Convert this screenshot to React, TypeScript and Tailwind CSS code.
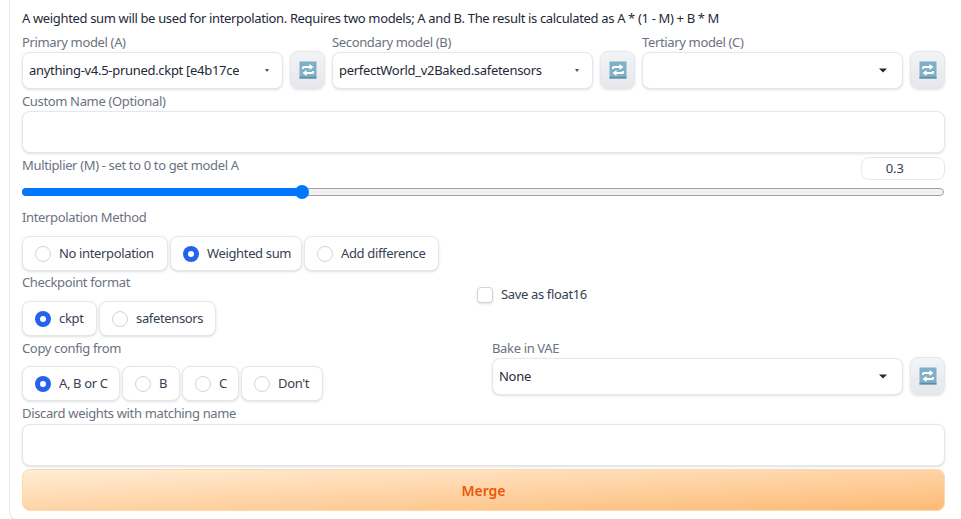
const font = "font-['Noto_Sans',sans-serif]";

function RefreshIcon() {
  return (
    <svg width="18" height="18" viewBox="0 0 18 18" aria-hidden="true">
      <rect x="0.5" y="0.5" width="17" height="17" fill="#7fb0c8" />
      <rect x="0.5" y="15.8" width="17" height="1.7" fill="#5d8ea8" />
      <path d="M3 8 V6.6 Q3 5 5 5 H10.5 V3 L14.5 6 L10.5 9 V7 H5.2 Q5 7 5 8 Z" fill="#fff" />
      <path d="M15 10 V11.4 Q15 13 13 13 H7.5 V15 L3.5 12 L7.5 9 V11 H12.8 Q13 11 13 10 Z" fill="#fff" />
    </svg>
  );
}

function RefreshButton() {
  return (
    <button className="w-[35px] h-[38px] shrink-0 -mt-px rounded-lg bg-gradient-to-b from-[#f3f4f6] to-[#e5e7eb] border border-[#e5e7eb] shadow-sm flex items-center justify-center">
      <RefreshIcon />
    </button>
  );
}

function Label({ children }: { children: React.ReactNode }) {
  return <div className="text-[13px] tracking-[-0.35px] leading-[18px] text-[#6b7280]">{children}</div>;
}

function Caret({ small }: { small?: boolean }) {
  return small ? (
    <svg width="4" height="3" viewBox="0 0 4 3" className="shrink-0"><path d="M0 0H4L2 3Z" fill="#4b5563" /></svg>
  ) : (
    <svg width="8" height="5" viewBox="0 0 8 5" className="shrink-0"><path d="M0 0.5H8L4 4.5Z" fill="#1f2937" /></svg>
  );
}

function Select({ value, small, pr }: { value: string; small?: boolean; pr: string }) {
  return (
    <div className={`flex-1 min-w-0 h-[37px] rounded-lg border border-[#e5e7eb] bg-white shadow-sm flex items-center justify-between pl-[6px] ${pr}`}>
      <span className="text-[13px] tracking-[-0.3px] text-[#1f2937] whitespace-nowrap overflow-hidden">{value}</span>
      <Caret small={small} />
    </div>
  );
}

function ModelField({ label, value, small }: { label: string; value: string; small?: boolean }) {
  return (
    <div className="w-[303px] shrink-0">
      <Label>{label}</Label>
      <div className="flex gap-[7px] mt-[1px]">
        <Select value={value} small={small} pr={small ? "pr-[13px]" : "pr-[15px]"} />
        <RefreshButton />
      </div>
    </div>
  );
}

function Radio({ label, checked, w }: { label: string; checked?: boolean; w: string }) {
  return (
    <div className={`${w} h-[35px] rounded-lg border border-[#e5e7eb] bg-white shadow-sm flex items-center pl-[12px] gap-[8px]`}>
      {checked ? (
        <span className="w-4 h-4 rounded-full bg-[#2563eb] flex items-center justify-center shrink-0">
          <span className="w-[6px] h-[6px] rounded-full bg-white" />
        </span>
      ) : (
        <span className="w-4 h-4 rounded-full border border-[#d1d5db] bg-white shrink-0" />
      )}
      <span className="text-[13px] tracking-[-0.35px] text-[#374151] whitespace-nowrap">{label}</span>
    </div>
  );
}

function TextBox() {
  return <div className="h-[42px] rounded-lg border border-[#e5e7eb] bg-white shadow-sm" />;
}

export default function App() {
  return (
    <div className={`w-[961px] h-[519px] bg-white overflow-hidden ${font}`}>
      <div className="ml-[9px] w-[952px] h-[520px] border-l border-b border-[#e5e7eb] rounded-bl-lg pl-3 pr-[16px] pt-[9px]">
        <div className="text-[13px] tracking-[-0.35px] leading-[18px] text-[#1f2937] whitespace-nowrap">
          A weighted sum will be used for interpolation. Requires two models; A and B. The result is calculated as A * (1 - M) + B * M
        </div>
        <div className="flex gap-[7px] mt-[6px]">
          <ModelField label="Primary model (A)" value="anything-v4.5-pruned.ckpt [e4b17ce" small />
          <ModelField label="Secondary model (B)" value="perfectWorld_v2Baked.safetensors" small />
          <ModelField label="Tertiary model (C)" value="" />
        </div>
        <div className="mt-[3px]">
          <Label>Custom Name (Optional)</Label>
          <div className="mt-[1px]"><TextBox /></div>
        </div>
        <div className="flex justify-between mt-[4px]">
          <div className="mt-[-1px]"><Label>Multiplier (M) - set to 0 to get model A</Label></div>
          <div className="w-[84px] h-[23px] rounded-lg border border-[#e5e7eb] bg-white text-[13px] text-[#374151] flex items-center justify-end pr-[40px]">0.3</div>
        </div>
        <div className="relative h-[8px] mt-[8px] mr-px rounded-full border border-[#9ca3af] bg-[#f0f0f0]">
          <div className="absolute left-[-1px] top-[-1px] h-[8px] w-[281px] rounded-full bg-[#0075ff]" />
          <div className="absolute left-[272px] top-[-4px] w-[14px] h-[14px] rounded-full bg-[#0075ff]" />
        </div>
        <div className="mt-[12px]"><Label>Interpolation Method</Label></div>
        <div className="flex gap-[2px] mt-[10px]">
          <Radio label="No interpolation" w="w-[146px]" />
          <Radio label="Weighted sum" checked w="w-[132px]" />
          <Radio label="Add difference" w="w-[135px]" />
        </div>
        <div className="flex mt-[2px]">
          <div className="w-[455px] shrink-0">
            <Label>Checkpoint format</Label>
            <div className="flex gap-[2px] mt-[10px]">
              <Radio label="ckpt" checked w="w-[75px]" />
              <Radio label="safetensors" w="w-[117px]" />
            </div>
          </div>
          <div className="flex items-center gap-[8px] h-[16px] mt-[14px]">
            <span className="w-4 h-4 rounded border border-[#d1d5db] bg-white shadow-sm" />
            <span className="text-[13px] tracking-[-0.35px] text-[#374151]">Save as float16</span>
          </div>
        </div>
        <div className="flex mt-[3px]">
          <div className="w-[470px] shrink-0">
            <Label>Copy config from</Label>
            <div className="flex gap-[2px] mt-[9px]">
              <Radio label="A, B or C" checked w="w-[98px]" />
              <Radio label="B" w="w-[58px]" />
              <Radio label="C" w="w-[57px]" />
              <Radio label="Don't" w="w-[82px]" />
            </div>
          </div>
          <div className="flex-1 min-w-0">
            <Label>Bake in VAE</Label>
            <div className="flex gap-[7px] mt-[1px]">
              <Select value="None" pr="pr-[15px]" />
              <RefreshButton />
            </div>
          </div>
        </div>
        <div className="mt-[3px]">
          <Label>Discard weights with matching name</Label>
          <div className="mt-[2px]"><TextBox /></div>
        </div>
        <button className="w-full h-[42px] mt-[3px] rounded-lg border border-[#fed7aa] bg-gradient-to-br from-[#ffedd5] to-[#fdba74] text-[14px] font-semibold text-[#ea580c]">
          Merge
        </button>
      </div>
    </div>
  );
}
